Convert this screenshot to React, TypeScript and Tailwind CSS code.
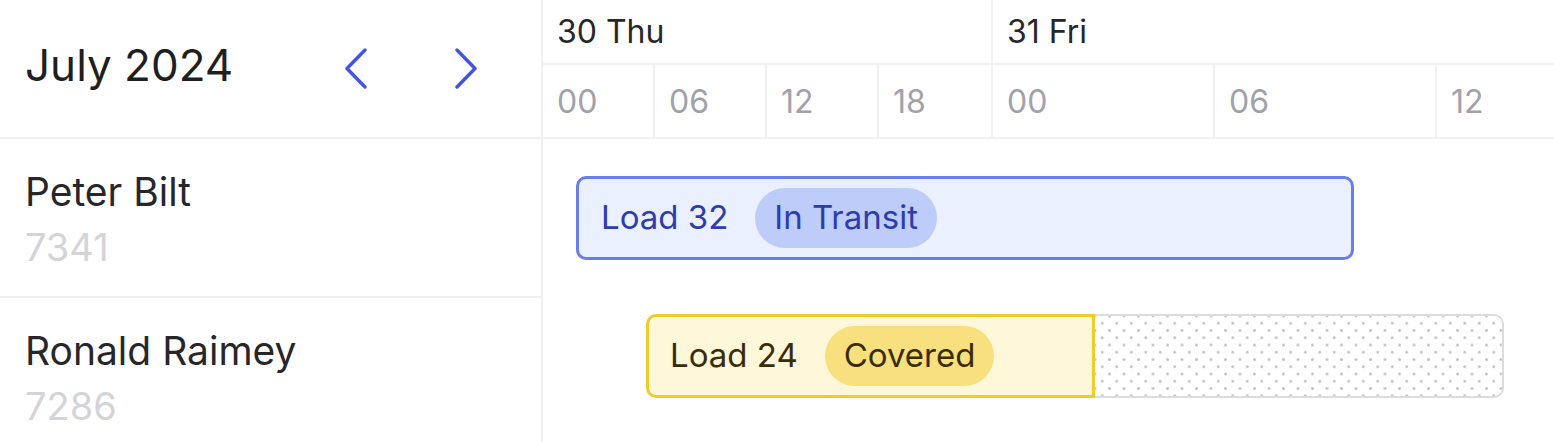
import React from 'react';

const thuHours = ['00', '06', '12', '18'];
const friHours = ['00', '06', '12'];

function Chevron({ dir }: { dir: 'left' | 'right' }) {
  const points = dir === 'left' ? '29,2 11,20.5 29,39' : '11,2 29,20.5 11,39';
  return (
    <button className="w-[40px] h-[40px] flex items-center justify-center text-[#4354e2]">
      <svg width="40" height="41" viewBox="0 0 40 41" fill="none">
        <polyline points={points} stroke="currentColor" strokeWidth="3.4" strokeLinecap="round" strokeLinejoin="round" />
      </svg>
    </button>
  );
}

function Driver({ name, id }: { name: string; id: string }) {
  return (
    <>
      <div className="text-[39px] leading-[48px] text-[#27272a]">{name}</div>
      <div className="text-[38px] leading-[46px] mt-[8px] text-[#d4d4d8]">{id}</div>
    </>
  );
}

export default function App() {
  return (
    <div className="w-[1554px] h-[442px] overflow-hidden bg-white flex flex-col font-['Inter',sans-serif]">
      {/* header */}
      <div className="flex h-[139px] shrink-0 border-b-2 border-[#f1f1f4]">
        <div className="w-[543px] shrink-0 border-r-2 border-[#f1f1f4] flex items-center justify-between pl-[25px] pr-[55px]">
          <span className="text-[44px] leading-none text-[#1f1f22] pb-[8px]">July 2024</span>
          <div className="flex gap-[70px]">
            <Chevron dir="left" />
            <Chevron dir="right" />
          </div>
        </div>
        <div className="flex-1 flex overflow-hidden">
          <div className="w-[450px] shrink-0 flex flex-col border-r-2 border-[#f1f1f4]">
            <div className="h-[65px] border-b-2 border-[#f1f1f4] flex items-center pl-[14px] text-[32px] text-[#27272a]">
              30 Thu
            </div>
            <div className="flex-1 flex">
              {thuHours.map((h, i) => (
                <div
                  key={h}
                  className={`w-[112px] flex items-center pl-[14px] pt-[2px] text-[32px] text-[#a1a1aa] ${
                    i < 3 ? 'border-r-2 border-[#f1f1f4]' : ''
                  }`}
                >
                  {h}
                </div>
              ))}
            </div>
          </div>
          <div className="flex-1 flex flex-col">
            <div className="h-[65px] border-b-2 border-[#f1f1f4] flex items-center pl-[14px] text-[32px] text-[#27272a]">
              31 Fri
            </div>
            <div className="flex-1 flex">
              {friHours.map((h) => (
                <div key={h} className="w-[222px] shrink-0 flex items-center pl-[14px] pt-[2px] text-[32px] text-[#a1a1aa] border-r-2 border-[#f1f1f4]">
                  {h}
                </div>
              ))}
            </div>
          </div>
        </div>
      </div>

      {/* row 1 */}
      <div className="flex h-[159px] shrink-0">
        <div className="w-[543px] shrink-0 border-r-2 border-b-2 border-[#f1f1f4] pt-[29px] pl-[25px]">
          <Driver name="Peter Bilt" id="7341" />
        </div>
        <div className="flex-1 pt-[37px] pl-[33px]">
          <div className="w-[778px] h-[84px] rounded-[10px] border-[3px] border-[#6a7ee9] bg-[#eaf0fe] flex items-center pl-[22px] gap-[27px]">
            <span className="text-[33px] text-[#2e3daa]">Load 32</span>
            <span className="h-[60px] rounded-full bg-[#bdccf9] px-[19px] flex items-center text-[33px] text-[#2e3daa]">
              In Transit
            </span>
          </div>
        </div>
      </div>

      {/* row 2 */}
      <div className="flex flex-1">
        <div className="w-[543px] shrink-0 border-r-2 border-[#f1f1f4] pt-[29px] pl-[25px]">
          <Driver name="Ronald Raimey" id="7286" />
        </div>
        <div className="flex-1 pt-[16px] pl-[103px]">
          <div className="flex h-[84px]">
            <div className="w-[449px] rounded-l-[10px] border-[3px] border-[#f1ca2c] bg-[#fef7d9] flex items-center pl-[21px] gap-[27px]">
              <span className="text-[33px] text-[#3a2c07]">Load 24</span>
              <span className="h-[60px] rounded-full bg-[#f9e07f] px-[19px] flex items-center text-[33px] text-[#3a2c07]">
                Covered
              </span>
            </div>
            <div className="w-[409px] rounded-r-[10px] border-2 border-l-0 border-[#dcdcdf] bg-white bg-[radial-gradient(#c4c4c7_1.1px,transparent_1.7px),radial-gradient(#c4c4c7_1.1px,transparent_1.7px)] bg-[length:14.5px_14.5px] bg-[position:0_0,7.25px_7.25px]" />
          </div>
        </div>
      </div>
    </div>
  );
}
